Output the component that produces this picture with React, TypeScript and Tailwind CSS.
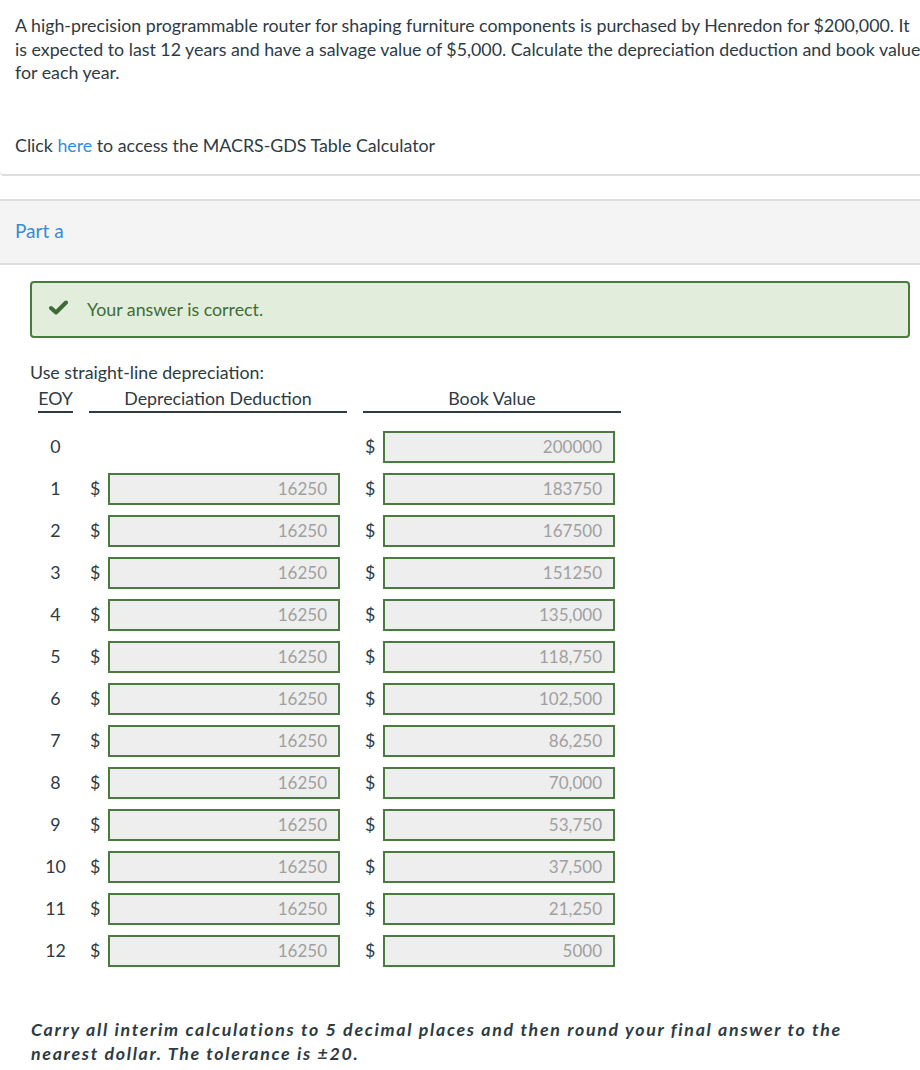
const deduction = Array.from({ length: 12 }, () => '16250')
const book = [
  '200000', '183750', '167500', '151250', '135,000', '118,750', '102,500',
  '86,250', '70,000', '53,750', '37,500', '21,250', '5000',
]

function Field({ value }: { value: string }) {
  return (
    <div className="w-[232px] h-[32px] border-2 border-[#4a7b3e] bg-[#eeeeee] flex items-center justify-end pr-[11px] text-[17px] text-[#a0a0a0]">
      {value}
    </div>
  )
}

function Check() {
  return (
    <svg width="19" height="15" viewBox="0 0 19 15" className="flex-shrink-0">
      <path d="M2 8 L7 12.5 L17 2.5" fill="none" stroke="#3e6b36" strokeWidth="4" strokeLinecap="round" strokeLinejoin="round" />
    </svg>
  )
}

export default function App() {
  return (
    <div className="w-[920px] min-h-[1070px] bg-white text-[#2d3b45] text-[17.8px] font-['Lato','Noto_Sans',sans-serif]">
      {/* Question */}
      <div className="border-b-2 border-[#dedede] rounded-bl-[4px] px-[15px] pt-[14px] pb-[17px]">
        <p className="leading-[23.5px] whitespace-nowrap">
          A high-precision programmable router for shaping furniture components is purchased by Henredon for $200,000. It
          <br />
          is expected to last 12 years and have a salvage value of $5,000. Calculate the depreciation deduction and book value
          <br />
          for each year.
        </p>
        <p className="mt-[48px] leading-[24px]">
          Click <span className="text-[#368bd8]">here</span> to access the MACRS-GDS Table Calculator
        </p>
      </div>

      {/* Part header */}
      <div className="mt-[23px] h-[66px] bg-[#f4f4f4] border-y-2 border-[#dedede] flex items-center px-[15px]">
        <span className="text-[19px] text-[#368bd8]">Part a</span>
      </div>

      <div className="pl-[30px] pr-[10px] pt-[16px]">
        <div className="h-[57px] rounded-[4px] border-2 border-[#4a7b3e] bg-[#e2eedb] flex items-center gap-[19px] pl-[17px] pb-[4px]">
          <Check />
          <span className="text-[#3e6b36] mt-[4px]">Your answer is correct.</span>
        </div>

        <p className="mt-[22px] leading-[24px]">Use straight-line depreciation:</p>

        {/* Column headings */}
        <div className="flex gap-[16px] pl-[8px] leading-[24px] mt-[2px]">
          <div className="w-[35px] text-center border-b-2 border-[#2d3b45] pb-[1px]">EOY</div>
          <div className="w-[258px] text-center border-b-2 border-[#2d3b45] pb-[1px]">Depreciation Deduction</div>
          <div className="w-[258px] text-center border-b-2 border-[#2d3b45] pb-[1px]">Book Value</div>
        </div>

        {/* Rows */}
        <div className="mt-[18px] flex flex-col gap-[10px]">
          {book.map((bv, i) => (
            <div key={i} className="flex gap-[16px] pl-[8px] items-center">
              <div className="w-[35px] text-center">{i}</div>
              <div className="w-[258px] flex items-center">
                {i > 0 && (
                  <>
                    <span className="w-[19px] pl-[1px]">$</span>
                    <Field value={deduction[i - 1]} />
                  </>
                )}
              </div>
              <div className="w-[258px] flex items-center">
                <span className="w-[20px] pl-[2px]">$</span>
                <Field value={bv} />
              </div>
            </div>
          ))}
        </div>

        <p className="mt-[50px] pl-[1px] leading-[24px] font-bold italic tracking-[0.095em]">
          Carry all interim calculations to 5 decimal places and then round your final answer to the
          <br />
          nearest dollar. The tolerance is ±20.
        </p>
      </div>
    </div>
  )
}
